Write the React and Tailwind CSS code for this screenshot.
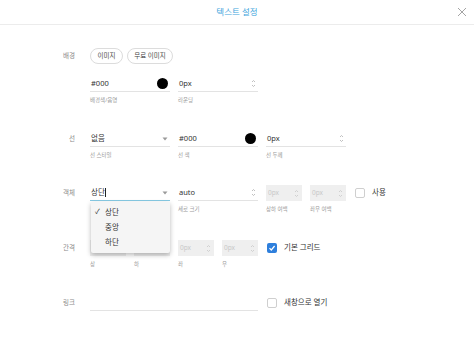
import React from 'react';

const Spinner = ({ light }) => (
  <svg width="5" height="9" viewBox="0 0 5 9" className={light ? 'text-[#c8c8c8]' : 'text-[#b0b0b0]'}>
    <path d="M1 3 L2.5 1.5 L4 3" fill="none" stroke="currentColor" strokeWidth="0.8" />
    <path d="M1 6 L2.5 7.5 L4 6" fill="none" stroke="currentColor" strokeWidth="0.8" />
  </svg>
);

const Caret = () => (
  <svg width="6" height="4" viewBox="0 0 6 4" className="text-[#9a9a9a]">
    <path d="M0.5 0.5 L5.5 0.5 L3 3.5 Z" fill="currentColor" />
  </svg>
);

const Field = ({ children, right, focus, caption, w = 'w-[80px]' }) => (
  <div className={w}>
    <div
      className={`flex h-[16px] items-center justify-between border-b ${
        focus ? 'border-[#86c9e3]' : 'border-[#e3e3e3]'
      } pl-[1px] pr-[2px]`}
    >
      <span className="text-[7.5px] text-[#333]">{children}</span>
      {right}
    </div>
    {caption && <div className="mt-[4px] h-[8px] text-[5.5px] leading-[8px] text-[#9a9a9a]">{caption}</div>}
  </div>
);

const SmallBox = ({ caption }) => (
  <div className="w-[36px]">
    <div className="flex h-[16px] items-center justify-between bg-[#efefef] pl-[2px] pr-[3px]">
      <span className="text-[6.5px] text-[#c8c8c8]">0px</span>
      <Spinner light />
    </div>
    {caption && <div className="mt-[4px] h-[8px] text-[5.5px] leading-[8px] text-[#9a9a9a]">{caption}</div>}
  </div>
);

const Dot = () => <span className="h-[11px] w-[11px] rounded-full bg-black" />;

const Check = ({ checked, label }) => (
  <div className="flex items-center gap-[7px]">
    {checked ? (
      <span className="flex h-[10px] w-[10px] items-center justify-center rounded-[2px] bg-[#2e7fdc]">
        <svg width="8" height="8" viewBox="0 0 8 8">
          <path d="M1.5 4.2 L3.3 6 L6.6 2" fill="none" stroke="#fff" strokeWidth="1.2" />
        </svg>
      </span>
    ) : (
      <span className="h-[10px] w-[10px] rounded-[2px] border border-[#cfcfcf] bg-white" />
    )}
    <span className="text-[7.5px] text-[#333]">{label}</span>
  </div>
);

const Label = ({ children }) => (
  <div className="w-[75px] shrink-0 text-right text-[6.5px] text-[#8a8a8a]">{children}</div>
);

export default function App() {
  return (
    <div
      className="relative h-[343px] w-[474px] overflow-hidden bg-white"
      style={{ fontFamily: "'Noto Sans', 'Noto Sans CJK KR', sans-serif" }}
    >
      {/* Header */}
      <div className="relative flex h-[25px] items-center justify-center border-b border-[#ececec]">
        <span className="text-[8.5px] text-[#42a6dd]">텍스트 설정</span>
        <svg className="absolute right-[7px] top-[7px]" width="10" height="10" viewBox="0 0 10 10">
          <path d="M1 1 L9 9 M9 1 L1 9" stroke="#9a9a9a" strokeWidth="0.9" />
        </svg>
      </div>

      <div className="pt-[23px]">
        {/* 배경 */}
        <div className="flex items-center">
          <Label>배경</Label>
          <div className="ml-[15px] flex gap-[4px]">
            <span className="flex h-[16px] w-[33px] items-center justify-center rounded-full border border-[#dcdcdc] text-[6.5px] text-[#444]">
              이미지
            </span>
            <span className="flex h-[16px] w-[46px] items-center justify-center rounded-full border border-[#dcdcdc] text-[6.5px] text-[#444]">
              무료 이미지
            </span>
          </div>
        </div>
        <div className="ml-[90px] mt-[12px] flex gap-[8px]">
          <Field caption="배경색/음영" right={<Dot />}>#000</Field>
          <Field caption="라운딩" right={<Spinner />}>0px</Field>
        </div>

        {/* 선 */}
        <div className="mt-[27px] flex items-start">
          <div className="flex h-[16px] items-center">
            <Label>선</Label>
          </div>
          <div className="ml-[15px] flex gap-[8px]">
            <Field caption="선 스타일" right={<Caret />}>없음</Field>
            <Field caption="선 색" right={<Dot />}>#000</Field>
            <Field caption="선 두께" right={<Spinner />}>0px</Field>
          </div>
        </div>

        {/* 객체 */}
        <div className="relative mt-[26px] flex items-start">
          <div className="flex h-[16px] items-center">
            <Label>객체</Label>
          </div>
          <div className="ml-[15px] flex gap-[8px]">
            <Field focus right={<Caret />}>
              <span className="flex items-center">
                상단<span className="ml-[0.5px] inline-block h-[9px] w-[1px] bg-[#222]" />
              </span>
            </Field>
            <Field caption="세로 크기" right={<Spinner />}>auto</Field>
            <div className="flex w-[80px] gap-[8px]">
              <SmallBox caption="상하 여백" />
              <SmallBox caption="좌우 여백" />
            </div>
            <div className="flex h-[16px] items-center pl-[1px]">
              <Check label="사용" />
            </div>
          </div>

          {/* Dropdown menu */}
          <div className="absolute left-[91px] top-[17px] z-10 w-[79px] rounded-b-[2px] bg-[#f5f5f5] py-[3px] shadow-[0_2px_5px_rgba(0,0,0,0.28)]">
            <div className="flex h-[15px] items-center text-[7.5px] text-[#333]">
              <span className="w-[14px] pl-[4px] text-[7px]">✓</span>
              <span>상단</span>
            </div>
            <div className="flex h-[15px] items-center text-[7.5px] text-[#333]">
              <span className="w-[14px]" />
              <span>중앙</span>
            </div>
            <div className="flex h-[15px] items-center text-[7.5px] text-[#333]">
              <span className="w-[14px]" />
              <span>하단</span>
            </div>
          </div>
        </div>

        {/* 간격 */}
        <div className="mt-[27px] flex items-start">
          <div className="flex h-[16px] items-center">
            <Label>간격</Label>
          </div>
          <div className="ml-[15px] flex gap-[8px]">
            <SmallBox caption="상" />
            <SmallBox caption="하" />
            <SmallBox caption="좌" />
            <SmallBox caption="우" />
            <div className="flex h-[16px] items-center pl-[1px]">
              <Check checked label="기본 그리드" />
            </div>
          </div>
        </div>

        {/* 링크 */}
        <div className="mt-[27px] flex items-start">
          <div className="flex h-[16px] items-center">
            <Label>링크</Label>
          </div>
          <div className="ml-[15px] flex gap-[8px]">
            <Field w="w-[168px]"></Field>
            <div className="flex h-[16px] items-center pl-[1px]">
              <Check label="새창으로 열기" />
            </div>
          </div>
        </div>
      </div>
    </div>
  );
}
